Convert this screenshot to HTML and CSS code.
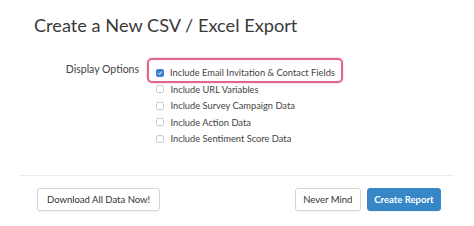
FILE: index.html
```html
<!DOCTYPE html>
<html lang="en">
<head>
  <meta charset="UTF-8" />
  <title>Create a New CSV / Excel Export</title>
  <link rel="stylesheet" href="styles.css">
</head>
<body>

  <div class="modal">
    <h1 class="modal-title">Create a New CSV / Excel Export</h1>

    <!-- Pilihan tampilan -->
    <div class="options-row">
      <div class="options-label">Display Options</div>
      <div class="options-list">
        <label class="option highlight">
          <span class="check checked">
            <svg viewBox="0 0 8 8"><path d="M1.6 4.2 L3.3 5.8 L6.4 2.2" /></svg>
          </span>
          Include Email Invitation &amp; Contact Fields
        </label>
        <label class="option"><span class="check"></span>Include URL Variables</label>
        <label class="option"><span class="check"></span>Include Survey Campaign Data</label>
        <label class="option"><span class="check"></span>Include Action Data</label>
        <label class="option"><span class="check"></span>Include Sentiment Score Data</label>
      </div>
    </div>

    <!-- Tombol bawah -->
    <div class="modal-footer">
      <button class="btn">Download All Data Now!</button>
      <div class="footer-right">
        <button class="btn btn-cancel">Never Mind</button>
        <button class="btn btn-primary">Create Report</button>
      </div>
    </div>
  </div>

</body>
</html>
```

FILE: styles.css
```css
* {
  box-sizing: border-box;
}

body {
  margin: 0;
  background: #fff;
  font-family: Lato, 'Open Sans', sans-serif;
  color: #444;
}

.modal {
  width: 474px;
  height: 226px;
  padding: 12px 20px 0;
}

.modal-title {
  font-size: 18.2px;
  font-weight: 400;
  color: #3a3a3a;
  margin: 0 0 0 14px;
  line-height: 26px;
}

.options-row {
  display: flex;
  margin-top: 28px;
  height: 109px;
}

.options-label {
  width: 123px;
  text-align: right;
  font-size: 10.5px;
  color: #444;
  padding-right: 4px;
  line-height: 14px;
  margin-top: -4px;
}

.options-list {
  display: flex;
  flex-direction: column;
  margin-left: 13px;
}

.option {
  display: flex;
  align-items: center;
  height: 16.5px;
  font-size: 9.3px;
  color: #444;
  gap: 6.5px;
  white-space: nowrap;
}

.option.highlight {
  position: relative;
  z-index: 1;
  background: #fff;
  border: 2.5px solid #e2678f;
  border-radius: 5px;
  box-shadow: 0 0 2px rgba(226, 103, 143, 0.6);
  height: 25px;
  padding: 5px 8px 0 6.5px;
  margin: -8.5px 0 -1.5px -9px;
  width: 196px;
}

.check {
  width: 8px;
  height: 8px;
  border: 1px solid #cfcfcf;
  border-radius: 2px;
  background: #fff;
  flex: none;
}

.check.checked {
  background: #3b7fd6;
  border-color: #3b7fd6;
}

.check svg {
  display: block;
  width: 100%;
  height: 100%;
  fill: none;
  stroke: #fff;
  stroke-width: 1.3;
}

.modal-footer {
  border-top: 1px solid #ececec;
  display: flex;
  justify-content: space-between;
  align-items: center;
  padding: 12px 13px 0 17px;
}

.footer-right {
  display: flex;
  gap: 6px;
}

.btn {
  font-family: Lato, 'Open Sans', sans-serif;
  font-size: 9.5px;
  color: #333;
  background: #fff;
  border: 1px solid #d6d6d6;
  border-radius: 3px;
  height: 23px;
  padding: 0 9px;
  box-shadow: 0 1px 1px rgba(0, 0, 0, 0.05);
}

.btn-cancel {
  padding: 0 7.5px;
}

.btn-primary {
  background: #3787c6;
  border-color: #3787c6;
  color: #fff;
  font-weight: 700;
  padding: 0 6.5px;
}
```
